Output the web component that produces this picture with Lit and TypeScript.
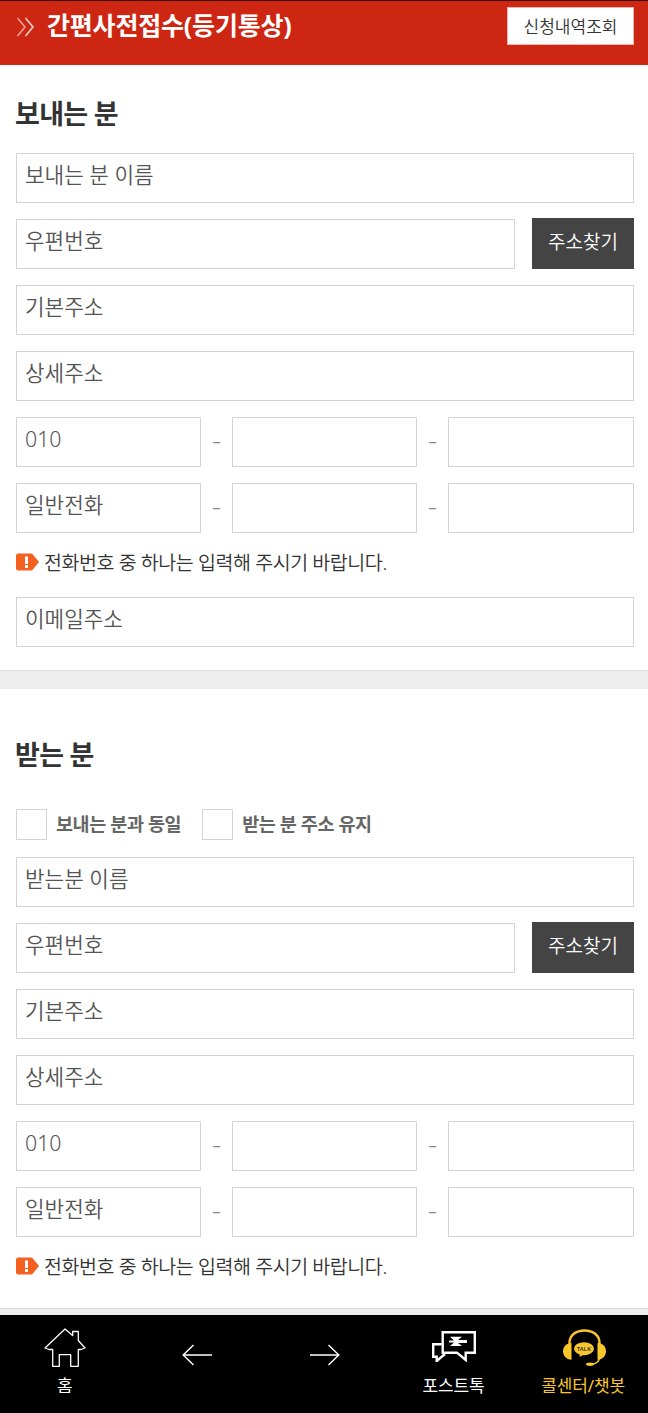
import { LitElement, html, css } from "lit";
import { customElement } from "lit/decorators.js";

@customElement("app-root")
export class AppRoot extends LitElement {
  static styles = css`
    :host { display: block; width: 648px; height: 1413px; overflow: hidden; background: #fff; font-family: "Noto Sans", "Noto Sans CJK KR", sans-serif; color: #333; }
    * { box-sizing: border-box; }
    .page { display: flex; flex-direction: column; height: 1413px; }
    header { height: 65px; flex: none; background: #cd2713; border-top: 1px solid #3a0a05; display: flex; justify-content: space-between; align-items: flex-start; padding: 6px 14px 0 16px; }
    .title { display: flex; align-items: center; gap: 11px; height: 38px; color: #fff; font-size: 25px; font-weight: 700; letter-spacing: -0.2px; }
    .title svg { display: block; margin-top: 2px; }
    .title span { padding-bottom: 4px; }
    .lookup { width: 127px; height: 38px; background: #fff; border: 1px solid #e8b5ad; color: #333; font-size: 17px; display: flex; align-items: center; justify-content: center; padding-bottom: 2px; font-weight: 350; }
    .sec { padding: 0 14px 0 16px; display: flex; flex-direction: column; }
    h2 { margin: 0; font-size: 27px; font-weight: 700; color: #333; letter-spacing: -0.7px; line-height: 40px; margin-left: -1px; }
    .first { padding-top: 29px; }
    .first h2 { margin-bottom: 19px; }
    .second { padding-top: 46px; }
    .second h2 { margin-bottom: 33px; }
    .stack { display: flex; flex-direction: column; gap: 16px; }
    .field { display: block; width: 100%; height: 50px; border: 1px solid #d4d4d4; padding: 0 8px 8px; background: #fff; font: inherit; font-size: 21.3px; font-weight: 350; color: #555; outline: none; border-radius: 0; }
    .field::placeholder { color: #555; opacity: 1; }
    .zip { display: flex; justify-content: space-between; align-items: flex-start; }
    .zip .field { width: 499px; }
    .find { width: 102px; height: 51px; margin-top: -1px; background: #444; color: #fff; font-size: 19px; font-weight: 350; display: flex; align-items: center; justify-content: center; padding-bottom: 5px; }
    .phone { display: grid; grid-template-columns: 185px 185px 186px; column-gap: 31px; }
    .cell { position: relative; }
    .dash { position: absolute; left: 100%; top: 0; width: 31px; height: 50px; display: flex; align-items: center; justify-content: center; color: #888; font-size: 17px; padding-bottom: 3px; }
    .note { display: flex; align-items: center; gap: 5px; height: 32px; font-size: 19.5px; color: #333; letter-spacing: -0.43px; margin-top: 13px; margin-bottom: 19px; font-weight: 350; }
    .note svg { display: block; flex: none; }
    .note span { padding-bottom: 2px; }
    .band { background: #eee; border-top: 1px solid #dedede; flex: none; }
    .b1 { height: 19px; margin-top: 23px; }
    .checks { display: flex; align-items: center; height: 32px; margin-bottom: 17px; }
    .box { width: 31px; height: 31px; border: 1px solid #d4d4d4; background: #fff; flex: none; }
    .lbl { font-size: 18.5px; font-weight: 700; color: #666; margin-left: 9px; margin-right: 21px; letter-spacing: -0.4px; padding-bottom: 3px; }
    .b2 { height: 7px; margin-top: 7px; }
    nav { height: 98px; flex: none; background: #000; display: grid; grid-template-columns: repeat(5, 1fr); }
    .item { display: flex; flex-direction: column; align-items: center; color: #fff; font-size: 17px; font-weight: 400; }
    .icon { height: 54px; width: 100%; display: flex; align-items: flex-end; justify-content: center; flex: none; }
    .icon svg { display: block; }
    .text { line-height: 26px; margin-top: 4px; letter-spacing: -0.1px; }
    .yellow { color: #f9c62c; }
    .home svg { margin-bottom: 1px; }
    .back svg { margin-left: 5px; margin-bottom: 3px; }
    .fwd svg { margin-left: 2px; margin-bottom: 3px; }
    .talk svg { margin-bottom: 7px; }
    .call svg { margin-left: 3px; margin-bottom: 3px; }
  `;

  private note() {
    return html`<div class="note">
      <svg width="23" height="18" viewBox="0 0 23 18"><path d="M2 0.5H16L23 9L16 17.5H2Q0 17.5 0 15.5V2.5Q0 0.5 2 0.5Z" fill="#f4601f"/><rect x="9" y="3.5" width="3" height="7.5" fill="#fff"/><rect x="9" y="12" width="3" height="3" fill="#fff"/></svg>
      <span>전화번호 중 하나는 입력해 주시기 바랍니다.</span>
    </div>`;
  }

  private phoneRow(ph: string) {
    return html`<div class="phone">
      <div class="cell"><input class="field" placeholder=${ph} /><span class="dash">–</span></div>
      <div class="cell"><input class="field" /><span class="dash">–</span></div>
      <div class="cell"><input class="field" /></div>
    </div>`;
  }

  private address() {
    return html`
      <div class="zip"><input class="field" placeholder="우편번호" /><div class="find">주소찾기</div></div>
      <input class="field" placeholder="기본주소" />
      <input class="field" placeholder="상세주소" />
      ${this.phoneRow("010")}
      ${this.phoneRow("일반전화")}
    `;
  }

  render() {
    return html`<div class="page">
      <header>
        <div class="title">
          <svg width="20" height="20" viewBox="0 0 20 20" fill="none" stroke-width="1.6"><path d="M1.5 1L9 10L1.5 19" stroke="#f2a08f"/><path d="M9.5 1L17 10L9.5 19" stroke="#f9d4cb"/></svg>
          <span>간편사전접수(등기통상)</span>
        </div>
        <div class="lookup">신청내역조회</div>
      </header>

      <section class="sec first">
        <h2>보내는 분</h2>
        <div class="stack">
          <input class="field" placeholder="보내는 분 이름" />
          ${this.address()}
        </div>
        ${this.note()}
        <input class="field" placeholder="이메일주소" />
      </section>
      <div class="band b1"></div>

      <section class="sec second">
        <h2>받는 분</h2>
        <div class="checks">
          <span class="box"></span><span class="lbl">보내는 분과 동일</span>
          <span class="box"></span><span class="lbl">받는 분 주소 유지</span>
        </div>
        <div class="stack">
          <input class="field" placeholder="받는분 이름" />
          ${this.address()}
        </div>
        ${this.note()}
      </section>
      <div class="band b2"></div>

      <nav>
        <div class="item home">
          <div class="icon"><svg width="42" height="40" viewBox="-1 -1 42 40" fill="none" stroke="#fff" stroke-width="1.3" stroke-linejoin="round"><path d="M20 0L0 19L4 20.5H7.7V37.3H14.3V25.7H25.7V37.3H33.3V20.5H36L40 19L33.3 11.5V2.5H27.7V6.5Z"/></svg></div>
          <div class="text">홈</div>
        </div>
        <div class="item back">
          <div class="icon"><svg width="30" height="22" viewBox="0 0 30 22" fill="none" stroke="#fff" stroke-width="1.4"><path d="M30 11H1.5M11.5 1L1.2 11L11.5 21"/></svg></div>
        </div>
        <div class="item fwd">
          <div class="icon"><svg width="30" height="22" viewBox="0 0 30 22" fill="none" stroke="#fff" stroke-width="1.4"><path d="M0 11H28.5M18.5 1L28.8 11L18.5 21"/></svg></div>
        </div>
        <div class="item talk">
          <div class="icon"><svg width="44" height="31" viewBox="0 0 44 31"><path d="M10.7 1.2H42.8V21.7H33.7V29L25 21.7H10.7Z" fill="none" stroke="#fff" stroke-width="2.4"/><path d="M9.7 13.3H1.2V25.7H4.7V30L13 23" fill="none" stroke="#fff" stroke-width="2.4"/><path d="M18 5.7H30L26 9H35V12H26L30 15H18L22 11.5H17V9.5H22Z" fill="#fff"/></svg></div>
          <div class="text">포스트톡</div>
        </div>
        <div class="item yellow call">
          <div class="icon"><svg width="43" height="37" viewBox="0 0 43 37" fill="none"><path d="M6.5 16V14C6.5 6 13 1.5 21.5 1.5C30 1.5 36.5 6 36.5 14V16" stroke="#f9c62c" stroke-width="2.4"/><path d="M8.5 14V30.7C3 30.7 0 26.5 0 22.3C0 18 3 14 8.5 14Z" fill="#f9c62c"/><path d="M34.5 14V30.7C40 30.7 43 26.5 43 22.3C43 18 40 14 34.5 14Z" fill="#f9c62c"/><path d="M36.5 30C35 33.5 32 35 28 35.5" stroke="#f9c62c" stroke-width="1.6"/><ellipse cx="27" cy="35.3" rx="4" ry="1.7" fill="#f9c62c"/><ellipse cx="21" cy="19.7" rx="10" ry="6.5" fill="#f9c62c"/><path d="M17 24.5L16.5 28L21 25.5Z" fill="#f9c62c"/><text x="21" y="21.8" font-size="5.5" font-weight="700" text-anchor="middle" fill="#333" font-family="Liberation Sans, sans-serif">TALK</text></svg></div>
          <div class="text">콜센터/챗봇</div>
        </div>
      </nav>
    </div>`;
  }
}
